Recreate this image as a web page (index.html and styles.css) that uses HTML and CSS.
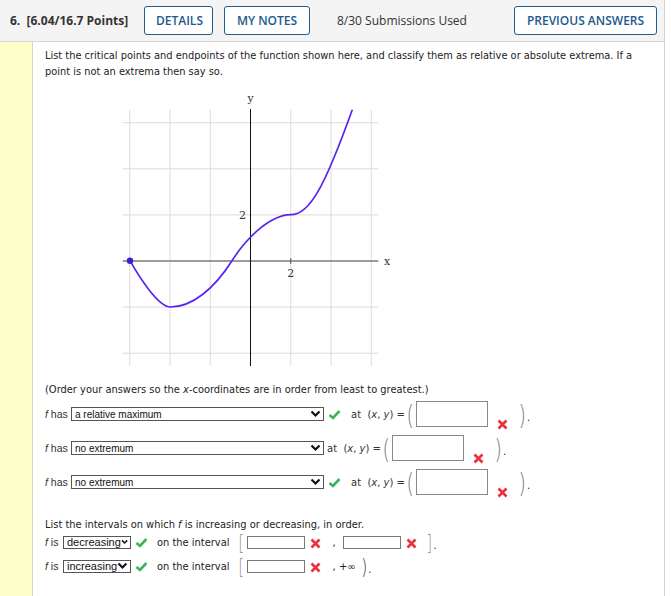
FILE: index.html
```html
<!DOCTYPE html>
<html lang="en">
<head>
    <meta charset="UTF-8">
    <title>Question 6</title>
    <link rel="stylesheet" href="styles.css">
</head>
<body>
<div class="question">
    <div class="qhead">
        <span class="qnum">6.&nbsp; [6.04/16.7 Points]</span>
        <button class="btn btn-details">DETAILS</button>
        <button class="btn btn-notes">MY NOTES</button>
        <span class="subs">8/30 Submissions Used</span>
        <button class="btn btn-prev">PREVIOUS ANSWERS</button>
    </div>

    <div class="qbody">
        <div class="side"></div>
        <div class="content">
            <p class="prompt">List the critical points and endpoints of the function shown here, and classify them as relative or absolute extrema. If a point is not an extrema then say so.</p>

            <svg class="graph" width="285" height="282" viewBox="115 86 285 282">
                <g stroke="#dcdcdc" stroke-width="1">
                    <line x1="129.75" y1="106.7" x2="129.75" y2="362.7"/>
                    <line x1="170" y1="106.7" x2="170" y2="362.7"/>
                    <line x1="210.25" y1="106.7" x2="210.25" y2="362.7"/>
                    <line x1="290.75" y1="106.7" x2="290.75" y2="362.7"/>
                    <line x1="331" y1="106.7" x2="331" y2="362.7"/>
                    <line x1="371.25" y1="106.7" x2="371.25" y2="362.7"/>
                    <line x1="122.7" y1="119.7" x2="378.3" y2="119.7"/>
                    <line x1="122.7" y1="165.8" x2="378.3" y2="165.8"/>
                    <line x1="122.7" y1="211.9" x2="378.3" y2="211.9"/>
                    <line x1="122.7" y1="304.1" x2="378.3" y2="304.1"/>
                    <line x1="122.7" y1="350.2" x2="378.3" y2="350.2"/>
                </g>
                <line x1="122.7" y1="258" x2="378.3" y2="258" stroke="#7a7a7a" stroke-width="1.5"/>
                <line x1="250.5" y1="106" x2="250.5" y2="363" stroke="#111" stroke-width="1"/>
                <line x1="290.75" y1="255" x2="290.75" y2="261" stroke="#555" stroke-width="1"/>
                <g class="glabel">
                    <text x="250.5" y="99" text-anchor="middle">y</text>
                    <text x="387" y="262" text-anchor="middle">x</text>
                    <text x="246" y="216" text-anchor="end">2</text>
                    <text x="290.75" y="274" text-anchor="middle">2</text>
                </g>
                <path d="M130,257.7 C138,272 158,304 170.3,304 C192,304 214,286 232,257.7 C244,238.8 268,212 291,211.7 C310,211.7 325.3,181.7 352.3,106.7"
                      fill="none" stroke="#5a22f0" stroke-width="1.7"/>
                <circle cx="130" cy="257.7" r="3.2" fill="#3b20d6"/>
            </svg>

            <p class="note">(Order your answers so the <i>x</i>-coordinates are in order from least to greatest.)</p>

            <div class="row">
                <span class="lbl"><i>f</i> has</span>
                <span class="sel sel-wide">a relative maximum<svg class="chev" width="11" height="8" viewBox="0 0 11 8"><path d="M1.5,1.5 L5.5,5.5 L9.5,1.5" fill="none" stroke="#111" stroke-width="2.2"/></svg></span>
                <svg class="ok" width="13" height="11" viewBox="0 0 13 11"><path d="M1.5,6 L5,9 L11.5,2" fill="none" stroke="#3cb55a" stroke-width="2.6"/></svg>
                <span class="at">at&nbsp; (<i>x</i>, <i>y</i>) =</span>
                <span class="paren">(</span>
                <span class="box"></span>
                <svg class="bad" width="11" height="11" viewBox="0 0 11 11"><path d="M1.5,1.5 L9.5,9.5 M9.5,1.5 L1.5,9.5" stroke="#ec2f3c" stroke-width="2.6"/></svg>
                <span class="paren close">)</span><span class="dot">.</span>
            </div>

            <div class="row">
                <span class="lbl"><i>f</i> has</span>
                <span class="sel sel-wide">no extremum<svg class="chev" width="11" height="8" viewBox="0 0 11 8"><path d="M1.5,1.5 L5.5,5.5 L9.5,1.5" fill="none" stroke="#111" stroke-width="2.2"/></svg></span>
                <span class="at at-near">at&nbsp; (<i>x</i>, <i>y</i>) =</span>
                <span class="paren">(</span>
                <span class="box"></span>
                <svg class="bad" width="11" height="11" viewBox="0 0 11 11"><path d="M1.5,1.5 L9.5,9.5 M9.5,1.5 L1.5,9.5" stroke="#ec2f3c" stroke-width="2.6"/></svg>
                <span class="paren close">)</span><span class="dot">.</span>
            </div>

            <div class="row">
                <span class="lbl"><i>f</i> has</span>
                <span class="sel sel-wide">no extremum<svg class="chev" width="11" height="8" viewBox="0 0 11 8"><path d="M1.5,1.5 L5.5,5.5 L9.5,1.5" fill="none" stroke="#111" stroke-width="2.2"/></svg></span>
                <svg class="ok" width="13" height="11" viewBox="0 0 13 11"><path d="M1.5,6 L5,9 L11.5,2" fill="none" stroke="#3cb55a" stroke-width="2.6"/></svg>
                <span class="at">at&nbsp; (<i>x</i>, <i>y</i>) =</span>
                <span class="paren">(</span>
                <span class="box"></span>
                <svg class="bad" width="11" height="11" viewBox="0 0 11 11"><path d="M1.5,1.5 L9.5,9.5 M9.5,1.5 L1.5,9.5" stroke="#ec2f3c" stroke-width="2.6"/></svg>
                <span class="paren close">)</span><span class="dot">.</span>
            </div>

            <p class="note note-int">List the intervals on which <i>f</i> is increasing or decreasing, in order.</p>

            <div class="irow">
                <span class="lbl"><i>f</i> is</span>
                <span class="sel sel-small">decreasing<svg class="chev" width="11" height="8" viewBox="0 0 11 8"><path d="M1.5,1.5 L5.5,5.5 L9.5,1.5" fill="none" stroke="#111" stroke-width="2.2"/></svg></span>
                <svg class="ok" width="13" height="11" viewBox="0 0 13 11"><path d="M1.5,6 L5,9 L11.5,2" fill="none" stroke="#3cb55a" stroke-width="2.6"/></svg>
                <span class="on">on the interval</span>
                <span class="brk">[</span>
                <span class="ibox"></span>
                <svg class="ibad" width="11" height="11" viewBox="0 0 11 11"><path d="M1.5,1.5 L9.5,9.5 M9.5,1.5 L1.5,9.5" stroke="#ec2f3c" stroke-width="2.6"/></svg>
                <span class="comma">,</span>
                <span class="ibox"></span>
                <svg class="ibad" width="11" height="11" viewBox="0 0 11 11"><path d="M1.5,1.5 L9.5,9.5 M9.5,1.5 L1.5,9.5" stroke="#ec2f3c" stroke-width="2.6"/></svg>
                <span class="brk brk-close">]</span><span class="dot">.</span>
            </div>

            <div class="irow">
                <span class="lbl"><i>f</i> is</span>
                <span class="sel sel-small">increasing<svg class="chev" width="11" height="8" viewBox="0 0 11 8"><path d="M1.5,1.5 L5.5,5.5 L9.5,1.5" fill="none" stroke="#111" stroke-width="2.2"/></svg></span>
                <svg class="ok" width="13" height="11" viewBox="0 0 13 11"><path d="M1.5,6 L5,9 L11.5,2" fill="none" stroke="#3cb55a" stroke-width="2.6"/></svg>
                <span class="on">on the interval</span>
                <span class="brk">[</span>
                <span class="ibox"></span>
                <svg class="ibad" width="11" height="11" viewBox="0 0 11 11"><path d="M1.5,1.5 L9.5,9.5 M9.5,1.5 L1.5,9.5" stroke="#ec2f3c" stroke-width="2.6"/></svg>
                <span class="comma">, +∞</span><span class="brk brk-paren">)</span><span class="dot">.</span>
            </div>
        </div>
    </div>
</div>
</body>
</html>
```

FILE: styles.css
```css
body {
    margin: 0;
    background-color: #fff;
    font-family: "DejaVu Sans", Verdana, sans-serif;
    color: #222;
}
.question {
    width: 664px;
    height: 596px;
    border-right: 1px solid #d0d0d0;
    display: flex;
    flex-direction: column;
}
.qhead {
    height: 41px;
    background-color: #f4f4f4;
    border-bottom: 1px solid #d4d4d4;
    display: flex;
    align-items: center;
    padding-left: 10px;
    font-family: "Open Sans", sans-serif;
}
.qnum {
    font-size: 12px;
    font-weight: 700;
    color: #333;
    width: 134px;
}
.btn {
    height: 29px;
    background-color: #fff;
    border: 1px solid #1f5f8f;
    border-radius: 3px;
    color: #1a5a8c;
    font-family: "Open Sans", sans-serif;
    font-size: 12px;
    font-weight: 600;
    padding: 0 11px;
    cursor: pointer;
}
.btn-details {
    width: 69px;
}
.btn-notes {
    width: 86px;
    margin-left: 11px;
}
.subs {
    font-size: 12px;
    color: #333;
    margin-left: 27px;
}
.btn-prev {
    width: 143px;
    margin-left: auto;
    margin-right: 7px;
}
.qbody {
    flex: 1;
    display: flex;
}
.side {
    width: 32px;
    background-color: #ffffcc;
    border-right: 1px solid #d8d8c0;
}
.content {
    flex: 1;
    padding: 6px 8px 0 12px;
    font-size: 10.5px;
}
.prompt {
    margin: 0;
    line-height: 16px;
    font-size: 9.85px;
}
.graph {
    display: block;
    margin: 9px 0 0 70px;
}
.glabel text {
    font-family: "DejaVu Serif", serif;
    font-size: 11px;
    fill: #333;
}
.note {
    margin: 12px 0 0;
    line-height: 14px;
    font-size: 9.9px;
}
.note-int {
    margin: 19px 0 -2px;
}
.row {
    display: flex;
    align-items: center;
    height: 34px;
    font-size: 10px;
}
.lbl {
    font-family: "Liberation Sans", Arial, sans-serif;
    font-size: 10.5px;
    color: #333;
    width: 26px;
}
.sel {
    display: flex;
    align-items: center;
    justify-content: space-between;
    border: 1px solid #555;
    font-family: "Liberation Sans", Arial, sans-serif;
    color: #111;
    box-sizing: border-box;
    padding: 0 2px 0 3px;
}
.sel-wide {
    width: 253px;
    height: 14px;
    font-size: 10px;
}
.sel-small {
    width: 68px;
    height: 13px;
    font-size: 11px;
}
.ok {
    margin-left: 4px;
    margin-right: 10px;
}
.at {
    color: #333;
}
.at-near {
    margin-left: 3px;
}
.paren {
    font-family: "DejaVu Sans", sans-serif;
    font-size: 27px;
    font-weight: 200;
    color: #777;
    transform: scaleX(0.7);
}
.paren.close {
    margin-left: 9px;
}
.dot {
    font-size: 10px;
    margin-top: 6px;
}
.box {
    width: 72px;
    height: 26px;
    border: 1px solid #888;
    box-sizing: border-box;
}
.bad {
    align-self: flex-end;
    margin: 0 0 1px 9px;
}
.irow {
    display: flex;
    align-items: center;
    height: 24px;
    font-size: 9.9px;
}
.irow .lbl {
    width: 18px;
}
.irow .ok {
    margin-right: 9px;
}
.on {
    width: 80px;
}
.brk {
    font-family: "DejaVu Sans", sans-serif;
    font-size: 22px;
    font-weight: 200;
    color: #999;
    transform: scaleX(0.7);
    margin-right: 1px;
}
.brk-close {
    margin-left: 8px;
    margin-right: 0;
}
.brk-paren {
    color: #333;
    margin: 0 0 0 -3px;
}
.ibox {
    width: 58px;
    height: 13px;
    border: 1px solid #777;
    box-sizing: border-box;
}
.ibad {
    margin: 2px 0 0 5px;
}
.comma {
    margin: 0 7px 0 12px;
    font-size: 10px;
}
```
